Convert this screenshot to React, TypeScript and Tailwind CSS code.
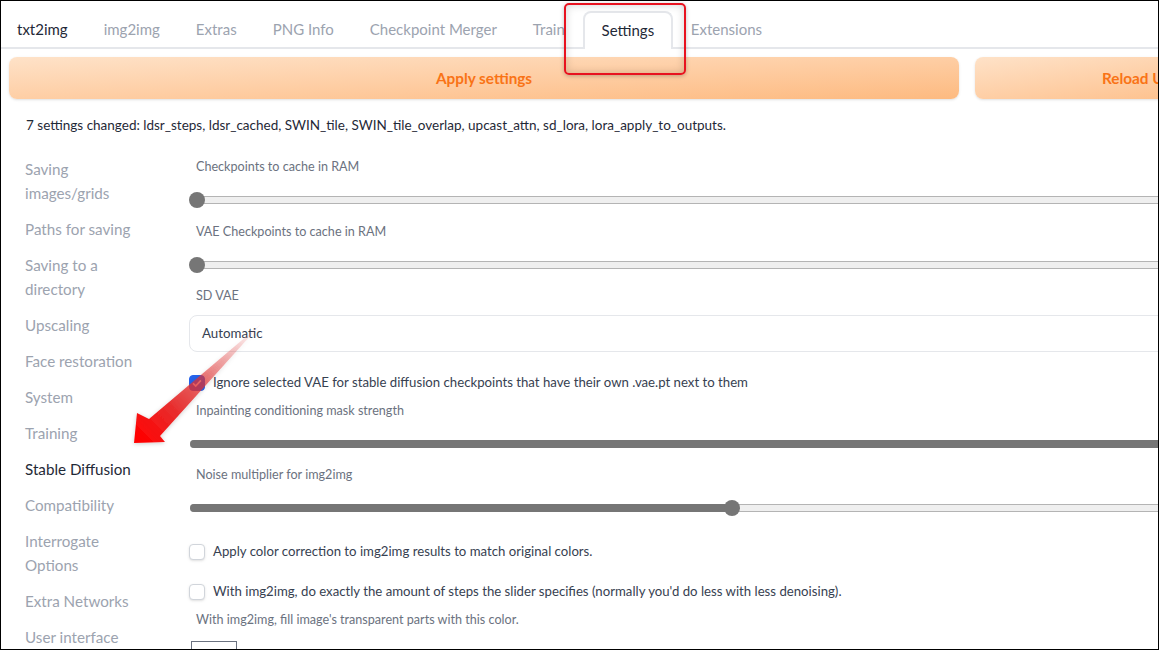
const TABS = ["txt2img", "img2img", "Extras", "PNG Info", "Checkpoint Merger", "Train", "Settings", "Extensions"];

const SECTIONS = [
  "Saving images/grids",
  "Paths for saving",
  "Saving to a directory",
  "Upscaling",
  "Face restoration",
  "System",
  "Training",
  "Stable Diffusion",
  "Compatibility",
  "Interrogate Options",
  "Extra Networks",
  "User interface",
];

function Tab({ label }: { label: string }) {
  if (label === "Settings") {
    return (
      <button className="relative z-10 -mb-[2px] h-[38px] w-[90px] rounded-t-lg border-2 border-b-0 border-[#e5e7eb] bg-white px-[15px] pb-[2px] text-[#1f2937]">
        {label}
      </button>
    );
  }
  return (
    <button className={`h-[35px] px-[18px] ${label === "txt2img" ? "text-[#1f2937]" : "text-[#9ca3af]"}`}>
      {label}
    </button>
  );
}

function Slider({ percent }: { percent: number }) {
  return (
    <div className="relative ml-[1px] h-[8px] w-[1100px] rounded-full border-y border-[#b4b4b4] bg-[#efefef]">
      <div className="absolute -top-px left-0 h-[8px] rounded-l-full bg-[#767676]" style={{ width: `${percent}%` }} />
      {percent < 100 && (
        <div
          className="absolute -top-[5px] -ml-[1px] h-[16px] w-[16px] rounded-full bg-[#767676]"
          style={{ left: `${percent}%` }}
        />
      )}
    </div>
  );
}

function Label({ children }: { children: string }) {
  return <p className="px-[7px] text-[12.6px] leading-[20px] text-[#6b7280]">{children}</p>;
}

function Check({ checked, children }: { checked?: boolean; children: string }) {
  return (
    <label className="flex h-[18px] items-center gap-[8px] text-[13.2px] text-[#374151]">
      <span
        className={`flex h-[16px] w-[16px] shrink-0 items-center justify-center rounded-[4px] border ${
          checked ? "border-[#2563eb] bg-[#2563eb]" : "border-[#d1d5db] bg-white shadow-sm"
        }`}
      >
        {checked && (
          <svg viewBox="0 0 16 16" className="h-[14px] w-[14px]" fill="none" stroke="white" strokeWidth="2">
            <path d="M3.5 8.5l3 3 6-6.5" />
          </svg>
        )}
      </span>
      {children}
    </label>
  );
}

function Arrow() {
  return (
    <svg className="absolute left-[120px] top-[320px] z-20 h-[135px] w-[145px]" viewBox="120 320 145 135">
      <defs>
        <linearGradient id="arrowFill" x1="250" y1="335" x2="140" y2="440" gradientUnits="userSpaceOnUse">
          <stop offset="0" stopColor="#e55050" stopOpacity="0.1" />
          <stop offset="0.45" stopColor="#e23030" stopOpacity="0.7" />
          <stop offset="0.7" stopColor="#e82525" stopOpacity="0.95" />
          <stop offset="1" stopColor="#ff0000" />
        </linearGradient>
        <filter id="arrowShadow" x="-20%" y="-20%" width="140%" height="140%">
          <feDropShadow dx="0" dy="1" stdDeviation="2" floodColor="#000" floodOpacity="0.2" />
        </filter>
      </defs>
      <path
        d="M260 323 L148 418 L136 412 L133 442 L164 441 L159 435 Z"
        fill="url(#arrowFill)"
        filter="url(#arrowShadow)"
      />
    </svg>
  );
}

export default function App() {
  return (
    <div
      className="relative h-[650px] w-[1159px] overflow-hidden border border-black bg-white text-[16px]"
      style={{ fontFamily: 'Lato, "Noto Sans", sans-serif' }}
    >
      <div className="absolute left-[563px] top-[2px] z-20 h-[72px] w-[122px] rounded-[5px] border-2 border-[#e8121f] shadow-[inset_0_0_8px_rgba(0,0,0,0.18),0_1px_4px_rgba(0,0,0,0.25)]" />
      <Arrow />

      <div className="w-[1300px]">
        <nav className="h-[48px] border-b-2 border-[#e5e7eb] text-[15px]">
          <div className="-ml-[2px] flex h-full items-end">
            {TABS.map((t) => (
              <Tab key={t} label={t} />
            ))}
          </div>
        </nav>

        <div className="mt-[8px] flex gap-[16px] pl-[8px]">
          <button className="h-[42px] w-[950px] rounded-lg bg-gradient-to-br from-[#fee2c8] to-[#fdba80] text-[15.3px] font-bold text-[#f97316] shadow-sm">
            Apply settings
          </button>
          <button className="h-[42px] w-[320px] rounded-lg bg-gradient-to-br from-[#fee2c8] to-[#fdba80] text-[15.3px] font-bold text-[#f97316] shadow-sm">
            Reload UI
          </button>
        </div>

        <p className="mt-[16px] h-[20px] pl-[25px] text-[13.5px] leading-[20px] text-[#1f2937]">
          7 settings changed: ldsr_steps, ldsr_cached, SWIN_tile, SWIN_tile_overlap, upcast_attn, sd_lora, lora_apply_to_outputs.
        </p>

        <div className="mt-[16px] flex">
          <aside className="w-[188px] shrink-0 pl-[24px] pr-[40px] text-[15.2px] leading-[24px]">
            {SECTIONS.map((s) => (
              <div key={s} className={`py-[6px] ${s === "Stable Diffusion" ? "text-[#1f2937]" : "text-[#9ca3af]"}`}>
                {s}
              </div>
            ))}
          </aside>

          <main className="flex w-[1100px] flex-col pt-[6px]">
            <Label>Checkpoints to cache in RAM</Label>
            <div className="mt-[19px]"><Slider percent={0} /></div>
            <div className="mt-[18px]"><Label>VAE Checkpoints to cache in RAM</Label></div>
            <div className="mt-[19px]"><Slider percent={0} /></div>
            <div className="mt-[17px]"><Label>SD VAE</Label></div>
            <div className="mt-[9px] flex h-[37px] w-[1100px] items-center rounded-lg border border-[#e5e7eb] px-[12px] text-[13.3px] text-[#374151]">
              Automatic
            </div>
            <div className="mt-[22px]"><Check checked>Ignore selected VAE for stable diffusion checkpoints that have their own .vae.pt next to them</Check></div>
            <div className="mt-[9px]"><Label>Inpainting conditioning mask strength</Label></div>
            <div className="mt-[19px]"><Slider percent={100} /></div>
            <div className="mt-[17px]"><Label>Noise multiplier for img2img</Label></div>
            <div className="mt-[19px]"><Slider percent={48.6} /></div>
            <div className="mt-[31px]"><Check>Apply color correction to img2img results to match original colors.</Check></div>
            <div className="mt-[22px]"><Check>With img2img, do exactly the amount of steps the slider specifies (normally you'd do less with less denoising).</Check></div>
            <div className="mt-[9px]"><Label>With img2img, fill image's transparent parts with this color.</Label></div>
            <div className="ml-[2px] mt-[11px] h-[30px] w-[46px] border border-[#6b7280] bg-white" />
          </main>
        </div>
      </div>
    </div>
  );
}
